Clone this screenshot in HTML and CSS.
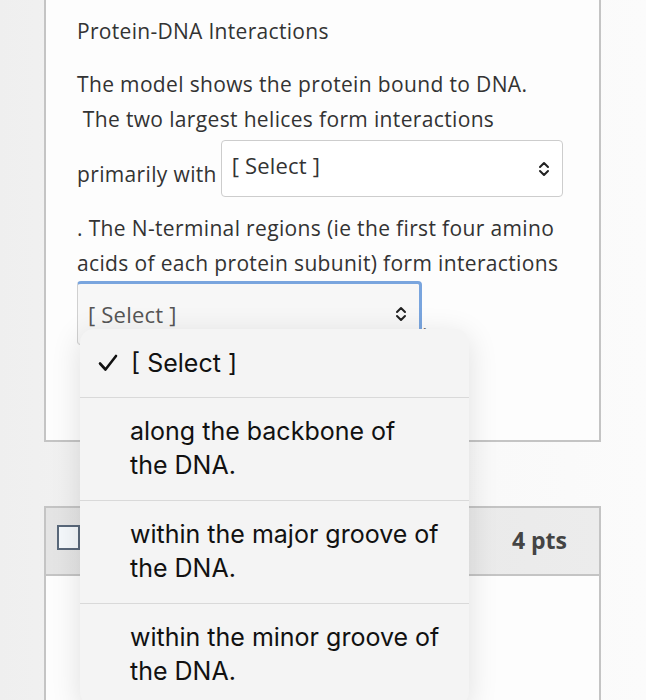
FILE: index.html
```html
<!DOCTYPE html>
<html lang="en">
<head>
  <meta charset="UTF-8">
  <meta name="viewport" content="width=device-width, initial-scale=1.0">
  <title>Quiz - Protein-DNA Interactions</title>
  <link rel="stylesheet" href="styles.css">
</head>
<body>
  <div class="page">
    <div class="question">
      <div class="question-body">
        <p class="title">Protein-DNA Interactions</p>
        <p class="text">
          The model shows the protein bound to DNA.<br>
          &nbsp;The two largest helices form interactions<br>
          primarily with
          <span class="select"><span class="select-label">[ Select ]</span><svg class="chevron" viewBox="0 0 12 16" width="12" height="16"><path d="M2 6 L6 2 L10 6 M2 10 L6 14 L10 10" fill="none" stroke="#222" stroke-width="2" stroke-linecap="round" stroke-linejoin="round"/></svg></span><br>
          . The N-terminal regions (ie the first four amino<br>
          acids of each protein subunit) form interactions<br>
          <span class="select select-focus"><span class="select-label">[ Select ]</span><svg class="chevron" viewBox="0 0 12 16" width="12" height="16"><path d="M2 6 L6 2 L10 6 M2 10 L6 14 L10 10" fill="none" stroke="#222" stroke-width="2" stroke-linecap="round" stroke-linejoin="round"/></svg></span>.
        </p>
      </div>
    </div>

    <div class="question next">
      <div class="question-header">
        <span class="check"></span>
        <span class="points">4 pts</span>
      </div>
      <div class="question-body"></div>
    </div>
  </div>

  <!-- native picker opened over the second select -->
  <ul class="picker">
    <li class="picker-item selected"><svg class="tick" viewBox="0 0 20 20" width="20" height="20"><path d="M2 10.5 L7.5 16.5 L18 3" fill="none" stroke="#111" stroke-width="2.6" stroke-linecap="round" stroke-linejoin="round"/></svg>[ Select ]</li>
    <li class="picker-item">along the backbone of<br>the DNA.</li>
    <li class="picker-item">within the major groove of<br>the DNA.</li>
    <li class="picker-item">within the minor groove of<br>the DNA.</li>
  </ul>
</body>
</html>
```

FILE: styles.css
```css
* {
  margin: 0;
  padding: 0;
  box-sizing: border-box;
}

body {
  font-family: 'Open Sans', sans-serif;
  color: #333;
  background: linear-gradient(to right, #efefef, #f6f6f6 40%, #fbfbfb);
  position: relative;
  height: 700px;
  overflow: hidden;
}

.page {
  padding: 0 45px 0 44px;
}

.question {
  background: #fdfdfd;
  border: 2px solid #c4c4c4;
  border-top: none;
}

.question-body {
  padding: 14px 32px 81px 31px;
}

.title {
  font-size: 21px;
  line-height: 35px;
  letter-spacing: 0.3px;
  margin-bottom: 18px;
}

.text {
  font-size: 21px;
  line-height: 35px;
  letter-spacing: 0.35px;
  white-space: nowrap;
}

.select {
  display: inline-flex;
  align-items: center;
  justify-content: space-between;
  width: 342px;
  height: 57px;
  margin-left: -2px;
  padding: 0 12px 0 10px;
  background: #fff;
  border: 1px solid #cdcdcd;
  border-radius: 4px;
  vertical-align: 8px;
  margin-top: 3px;
  margin-bottom: 14px;
  color: #333;
  font-size: 22px;
  letter-spacing: 0.2px;
  line-height: 1;
}

.select-label {
  padding-bottom: 8px;
}

.select-focus {
  width: 345px;
  height: 64px;
  margin-left: 0;
  background: #f7f7f7;
  border-top: 3px solid #79a5de;
  border-right: 3px solid #79a5de;
  border-left: 1px solid #d0d0d0;
  color: #555;
  margin-top: 0;
}

.select-focus .select-label {
  padding-bottom: 0;
}

.next {
  margin-top: 64px;
  border-top: 2px solid #c4c4c4;
}

.question-header {
  display: flex;
  align-items: center;
  justify-content: space-between;
  height: 68px;
  padding: 0 32px 8px 11px;
  background: linear-gradient(to right, #e4e4e4, #ececec);
  border-bottom: 2px solid #c4c4c4;
}

.check {
  width: 23px;
  height: 25px;
  border: 2px solid #59687a;
  background: #f4f8fb;
}

.points {
  font-size: 23px;
  font-weight: 700;
  color: #444;
  padding-top: 6px;
}

.question-body:empty {
  height: 200px;
}

.picker {
  position: absolute;
  left: 80px;
  top: 329px;
  width: 389px;
  list-style: none;
  background: #f4f4f4;
  border-radius: 14px;
  box-shadow: 0 6px 30px rgba(0, 0, 0, 0.12);
  font-family: 'Inter', sans-serif;
  font-size: 25px;
  line-height: 34px;
  color: #111;
  overflow: hidden;
}

.picker-item {
  padding: 16px 20px 18px 50px;
  border-top: 1px solid #d9d9d9;
}

.picker-item.selected {
  border-top: none;
  padding: 17px 20px 17px 18px;
}

.tick {
  display: inline-block;
  margin-right: 13px;
  vertical-align: -1px;
}
```
